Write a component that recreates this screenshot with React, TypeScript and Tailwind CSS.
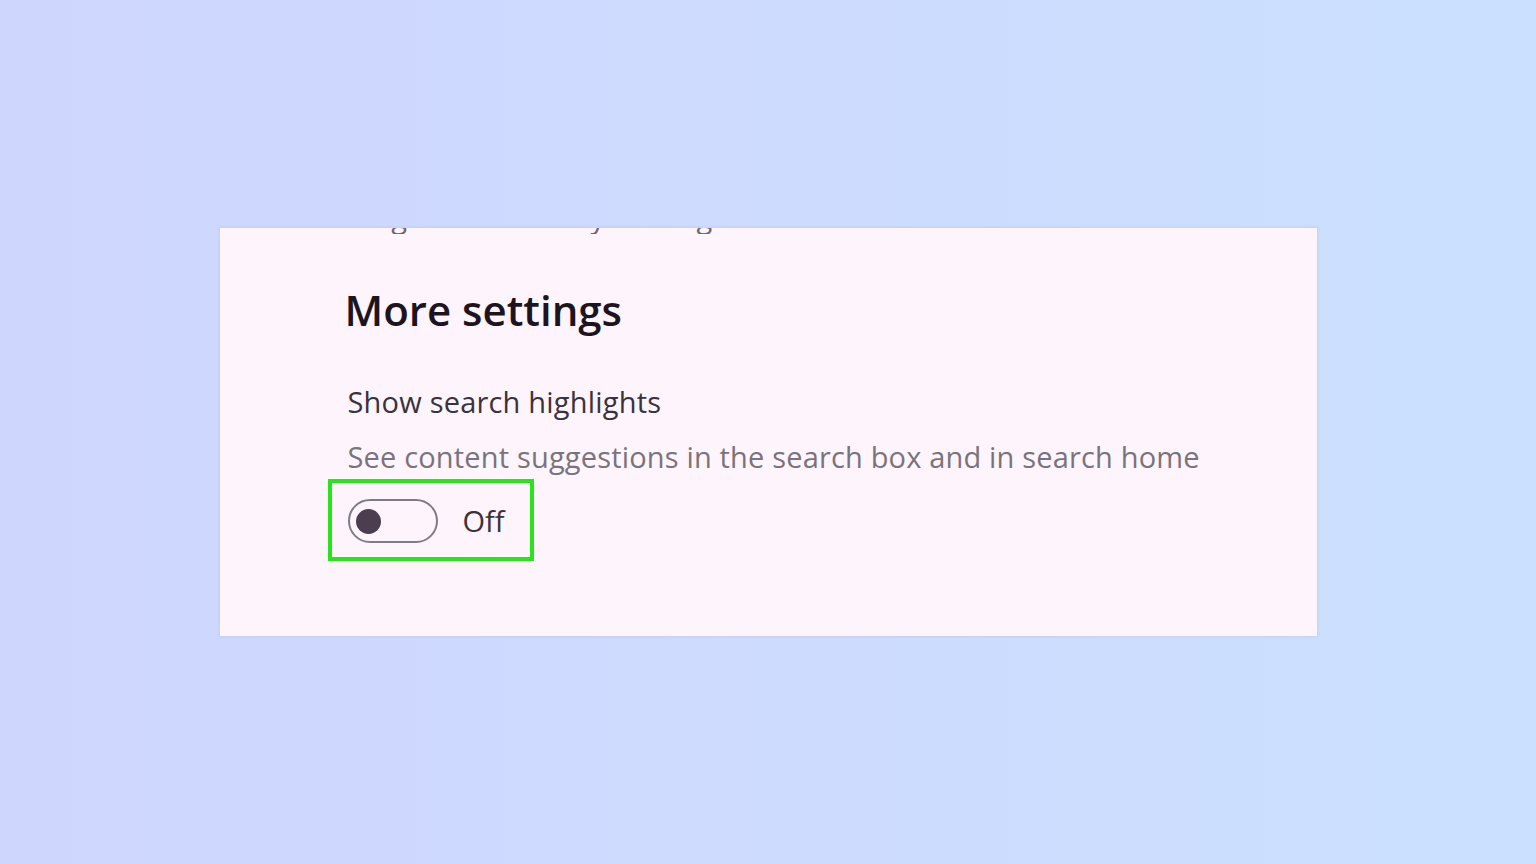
export default function App() {
  return (
    <div className="min-h-[864px] w-full bg-gradient-to-r from-[#cfd6fe] to-[#cbe0fe] pt-[228px] flex justify-center font-['Open_Sans',sans-serif]">
      <div className="w-[1097px] h-[408px] bg-[#fdf5fb] shadow-[0_0_3px_rgba(180,180,220,0.6)] overflow-hidden pl-[128px]">
        {/* previous row, scrolled out of view: only descenders show */}
        <div className="h-[6px] overflow-hidden">
          <p className="-mt-[28px] text-[29px] leading-[34px] text-[#6f6872] whitespace-nowrap">
            Bing search history and logs
          </p>
        </div>

        <h2 className="mt-[51px] -ml-[3px] text-[42px] leading-[50px] font-semibold text-[#1d1420]">
          More settings
        </h2>

        <p className="mt-[49px] text-[29px] leading-[36px] tracking-[0.2px] text-[#3a323d]">
          Show search highlights
        </p>
        <p className="mt-[19px] text-[29px] leading-[36px] tracking-[0.17px] text-[#7a737d]">
          See content suggestions in the search box and in search home
        </p>

        <div className="mt-[4px] -ml-[20px] inline-flex items-center border-4 border-[#28e51b] pl-[16px] pr-[25px] pt-[16px] pb-[14px]">
          <button
            type="button"
            className="w-[90px] h-[44px] rounded-full border-2 border-[#817b85] flex items-center pl-[6px]"
          >
            <span className="w-[25px] h-[25px] rounded-full bg-[#4d3d50]" />
          </button>
          <span className="ml-[25px] text-[29px] leading-[36px] text-[#3a323d]">Off</span>
        </div>
      </div>
    </div>
  );
}
